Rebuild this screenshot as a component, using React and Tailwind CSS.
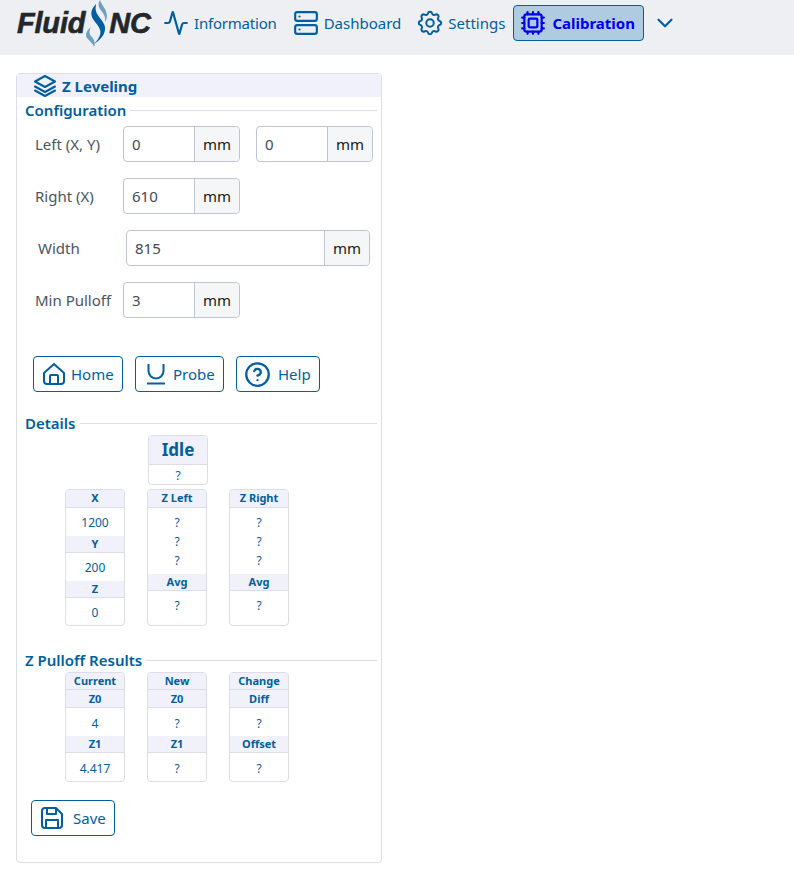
import React from 'react';
import { Activity, Server, Cpu, ChevronDown, CircleHelp } from 'lucide-react';
import { HiOutlineCog } from 'react-icons/hi';

function SettingsIcon() {
  return <HiOutlineCog size={30} className="m-[-2px]" style={{ strokeWidth: 1.6 }} />;
}

function LayersIcon() {
  return (
    <svg width="26" height="26" viewBox="0 0 26 26" fill="none" stroke="currentColor" strokeWidth="2" strokeLinejoin="round" strokeLinecap="round">
      <path d="M13 3 L23 8.5 L13 14 L3 8.5 Z" />
      <path d="M3 13.5 L13 19 L23 13.5" />
      <path d="M3 17.5 L13 23 L23 17.5" />
    </svg>
  );
}

function HomeIcon() {
  return (
    <svg width="26" height="26" viewBox="0 0 26 26" fill="none" stroke="currentColor" strokeWidth="2" strokeLinejoin="round" strokeLinecap="round">
      <path d="M3 12 L13 3 L23 12 V20 a3 3 0 0 1 -3 3 H6 a3 3 0 0 1 -3 -3 Z" />
      <path d="M9 23 V15 a1 1 0 0 1 1 -1 h6 a1 1 0 0 1 1 1 V23" />
    </svg>
  );
}

function ProbeIcon() {
  return (
    <svg width="26" height="26" viewBox="0 0 26 26" fill="none" stroke="currentColor" strokeWidth="2">
      <path d="M5.5 3 V10 a7.5 7.5 0 0 0 15 0 V3" />
      <path d="M4 22.5 H22" />
    </svg>
  );
}

function SaveIcon() {
  return (
    <svg width="26" height="26" viewBox="0 0 26 26" fill="none" stroke="currentColor" strokeWidth="2" strokeLinejoin="round">
      <path d="M6 3 H17 L23 9 V20 a3 3 0 0 1 -3 3 H6 a3 3 0 0 1 -3 -3 V6 a3 3 0 0 1 3 -3 Z" />
      <path d="M8 3 V9 H17 V4" />
      <path d="M7 23 V15 H19 V23" />
    </svg>
  );
}

function HelpIcon() {
  return <CircleHelp size={27} strokeWidth={2} />;
}

function NavItem({ icon: Icon, label, labelClass = '', active }) {
  if (active) {
    return (
      <div className="flex items-center h-9 pl-[6px] pr-2 gap-[6px] rounded border border-[#005f9e] bg-[#afcbdf] text-[#0000ee] font-bold">
        <Icon size={26} strokeWidth={2} />
        <span>{label}</span>
      </div>
    );
  }
  return (
    <div className="flex items-center h-9 px-2 gap-[5px] text-[#005f9e]">
      <Icon size={26} strokeWidth={2} />
      <span className={labelClass}>{label}</span>
    </div>
  );
}

function Logo() {
  return (
    <div className="flex items-center w-[139px] h-[48px] font-['Liberation_Sans',sans-serif] font-bold italic text-[29px] tracking-[-0.2px] [-webkit-text-stroke:0.6px_#23262b] text-[#23262b]">
      <span>Fluid</span>
      <svg width="24" height="48" viewBox="0 0 24 48" className="shrink-0">
        <path d="M11 4 C6 9 5 14 8 19 C12 25 17 29 15 35 C14 38 12 41 9 44 C15 40 21 34 20 27 C19 21 12 16 11 11 C10 8 11 6 11 4 Z" fill="#005f9e" stroke="none" />
        <path d="M15 0 C13 3 13 6 15 9 C18 13 21 16 20 22 C23 18 22 13 20 9 C18 6 16 3 15 0 Z" fill="#6d9fbe" stroke="none" />
        <path d="M6 27 C1 31 0 35 2 38 C4 41 8 43 9 47 C11 43 9 39 6 36 C4 34 4 30 6 27 Z" fill="#6d9fbe" stroke="none" />
      </svg>
      <span>NC</span>
    </div>
  );
}

function InputGroup({ value, className }) {
  return (
    <div className={`flex h-9 rounded border border-[#c0c4d2] ${className}`}>
      <div className="flex-1 flex items-center pl-2 text-[#3f4a5a]">{value}</div>
      <div className="w-[45px] flex items-center justify-center border-l border-[#c0c4d2] bg-[#f5f6f8] rounded-r text-[#1a1a1a]">mm</div>
    </div>
  );
}

function Legend({ children }) {
  return (
    <div className="flex items-center gap-[4px] font-semibold text-[#005f9e] text-[15px] leading-5">
      <span>{children}</span>
      <div className="flex-1 h-px bg-[#dcdde8]" />
    </div>
  );
}

function Head({ children, h = 'h-[17px]' }) {
  return (
    <div className={`${h} flex items-center justify-center bg-[#f0f1fa] border-b border-[#dcdde8] text-[11px] font-bold text-[#005f9e]`}>
      {children}
    </div>
  );
}

function Val({ children, h = 'h-[28px]', className = '' }) {
  return <div className={`${h} flex items-center justify-center text-[12px] text-[#005f9e] ${className}`}>{children}</div>;
}

function Column({ children }) {
  return <div className="w-[60px] rounded border border-[#dcdde8] overflow-hidden">{children}</div>;
}

function ActionButton({ icon: Icon, label, gap, className }) {
  return (
    <div className={`flex items-center h-9 rounded border border-[#005f9e] text-[#005f9e] ${gap} ${className}`}>
      <Icon />
      <span>{label}</span>
    </div>
  );
}

function ZColumn({ title }) {
  return (
    <Column>
      <Head h="h-[18px]">{title}</Head>
      <div className="pt-[5px] pb-[4px]">
        <Val h="h-[19px]">?</Val>
        <Val h="h-[19px]">?</Val>
        <Val h="h-[19px]">?</Val>
      </div>
      <Head>Avg</Head>
      <Val className="mb-[5px] pt-[2px]">?</Val>
    </Column>
  );
}

function PulloffColumn({ title, sub, second, a, b }) {
  return (
    <Column>
      <Head>{title}</Head>
      <Head h="h-[18px] pt-[1px]">{sub}</Head>
      <Val className="pt-[4px]">{a}</Val>
      <Head>{second}</Head>
      <Val className="pt-[4px]">{b}</Val>
    </Column>
  );
}

export default function App() {
  return (
    <div className="min-h-[886px] bg-white font-['Noto_Sans',sans-serif] text-[15px]">
      <header className="flex items-start h-[55px] pl-[17px] bg-[#eeeff3]">
        <Logo />
        <nav className="flex items-center pt-[5px] ml-[-1px]">
          <NavItem icon={Activity} label="Information" labelClass="tracking-[-0.2px]" />
          <NavItem icon={Server} label="Dashboard" />
          <NavItem icon={SettingsIcon} label="Settings" />
          <NavItem icon={Cpu} label="Calibration" active />
          <ChevronDown size={26} strokeWidth={2} className="ml-[8px] text-[#005f9e]" />
        </nav>
      </header>

      <main className="pt-[18px] pl-4">
        <section className="w-[366px] h-[790px] rounded border border-[#dcdde8]">
          <div className="flex items-center h-[23px] pl-[15px] gap-[4px] bg-[#f0f1fa] text-[#005f9e] font-bold text-[15px]">
            <LayersIcon />
            <span className="pt-[1px]">Z Leveling</span>
          </div>

          <div className="pl-2 pr-1">
            <div className="mt-[3px]"><Legend>Configuration</Legend></div>

            <div className="mt-[6px] pl-[10px] text-[#4b5563] flex flex-col gap-4">
              <div className="flex items-center">
                <span className="w-[88px]">Left (X, Y)</span>
                <InputGroup value="0" className="w-[117px]" />
                <InputGroup value="0" className="w-[117px] ml-4" />
              </div>
              <div className="flex items-center">
                <span className="w-[88px]">Right (X)</span>
                <InputGroup value="610" className="w-[117px]" />
              </div>
              <div className="flex items-center pl-[3px]">
                <span className="w-[88px]">Width</span>
                <InputGroup value="815" className="w-[244px]" />
              </div>
              <div className="flex items-center">
                <span className="w-[88px]">Min Pulloff</span>
                <InputGroup value="3" className="w-[117px]" />
              </div>
            </div>

            <div className="flex gap-3 mt-[38px] ml-2">
              <ActionButton icon={HomeIcon} label="Home" gap="gap-[4px] pl-[7px]" className="w-[90px]" />
              <ActionButton icon={ProbeIcon} label="Probe" gap="gap-[4px] pl-[7px]" className="w-[89px]" />
              <ActionButton icon={HelpIcon} label="Help" gap="gap-[7px] pl-[7px]" className="w-[84px]" />
            </div>

            <div className="mt-[21px]"><Legend>Details</Legend></div>

            <div className="ml-[123px] mt-[2px] w-[60px] rounded border border-[#dcdde8] overflow-hidden">
              <div className="h-[29px] flex items-center justify-center bg-[#f0f1fa] border-b border-[#dcdde8] text-[#005f9e] font-bold text-[17px]">Idle</div>
              <Val h="h-[19px]" className="pt-[3px]">?</Val>
            </div>

            <div className="flex gap-[22px] ml-[40px] mt-[4px]">
              <Column>
                <Head h="h-[18px]">X</Head><Val className="pt-[2px]">1200</Val>
                <Head>Y</Head><Val className="pt-[2px]">200</Val>
                <Head>Z</Head><Val h="h-[27px]" className="pt-[2px]">0</Val>
              </Column>
              <ZColumn title="Z Left" />
              <ZColumn title="Z Right" />
            </div>

            <div className="mt-[24px]"><Legend>Z Pulloff Results</Legend></div>

            <div className="flex gap-[22px] ml-[40px] mt-[2px]">
              <PulloffColumn title="Current" sub="Z0" second="Z1" a="4" b="4.417" />
              <PulloffColumn title="New" sub="Z0" second="Z1" a="?" b="?" />
              <PulloffColumn title="Change" sub="Diff" second="Offset" a="?" b="?" />
            </div>

            <ActionButton icon={SaveIcon} label="Save" gap="gap-[8px] pl-[7px]" className="w-[84px] mt-[18px] ml-[6px]" />
          </div>
        </section>
      </main>
    </div>
  );
}
